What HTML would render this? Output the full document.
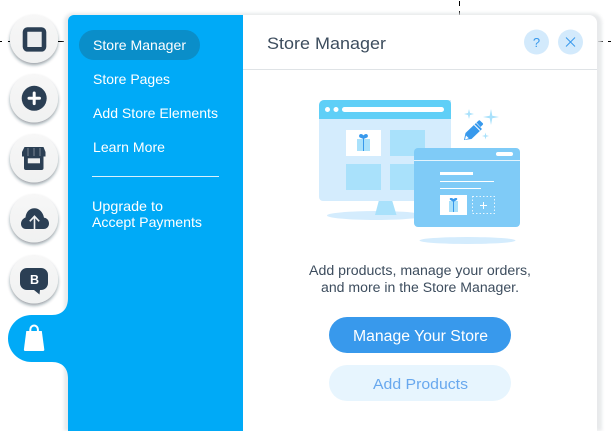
<!DOCTYPE html>
<html>
<head>
<meta charset="utf-8">
<style>
html,body{margin:0;padding:0;background:#fff;width:611px;height:431px;overflow:hidden}
svg{display:block}
text{font-family:"Liberation Sans",sans-serif}
</style>
</head>
<body>
<svg width="611" height="431" viewBox="0 0 611 431" xmlns="http://www.w3.org/2000/svg">
<defs>
<linearGradient id="btn" x1="0" x2="0" y1="0" y2="1"><stop offset="0" stop-color="#f7f7f7"/><stop offset="1" stop-color="#f0f1f1"/></linearGradient>
<filter id="sh" x="-30%" y="-30%" width="160%" height="160%"><feDropShadow dx="0" dy="2" stdDeviation="1.5" flood-color="#1f2d3d" flood-opacity=".45"/></filter>
<filter id="s2" x="-5%" y="-5%" width="110%" height="110%"><feGaussianBlur stdDeviation="1.5"/></filter>
</defs>

<!-- guide lines -->
<g fill="#000">
<rect x="0" y="41" width="2" height="1"/><rect x="8" y="41" width="2" height="1"/><rect x="58" y="41" width="6" height="1"/>
<rect x="598" y="41" width="5" height="1"/><rect x="608" y="41" width="3" height="1"/>
<rect x="459" y="1" width="1" height="5"/><rect x="459" y="11" width="1" height="4"/>
</g>

<!-- panel shadow -->
<path d="M72 13H592a10 10 0 0 1 10 10V431H64V22a9 9 0 0 1 8-9Z" fill="#e4e6e8" filter="url(#s2)" opacity=".85"/>

<!-- white panel -->
<path d="M243 15H589a8 8 0 0 1 8 8V431H243Z" fill="#fff"/>
<!-- blue panel -->
<path d="M74 15H243V431H68V21a6 6 0 0 1 6-6Z" fill="#00aaf7"/>
<!-- white divider -->
<rect x="243" y="69" width="354" height="1" fill="#dfe3e6"/>

<!-- active tab -->
<path d="M60 296H68V380H60Z" fill="#fff" opacity="0"/>
<path d="M68 298C68 309 62 315 52 315H31.500A23.500 23.500 0 0 0 31.500 362H52C62 362 68 368 68 378Z" fill="#00aaf7"/>
<path d="M26.300 331H41.800L44.300 349.500Q44.400 351 43 351H25.200Q23.800 351 23.900 349.500Z" fill="#fff"/>
<path d="M30.300 334V329.500A3.800 4 0 0 1 37.900 329.500V334" fill="none" stroke="#fff" stroke-width="2"/>

<!-- nav -->
<rect x="79" y="30" width="121" height="30" rx="15" fill="#0a8ec9"/>
<g fill="#fff" font-size="14">
<text x="93" y="50" textLength="93" lengthAdjust="spacingAndGlyphs">Store Manager</text>
<text x="93" y="84" textLength="77" lengthAdjust="spacingAndGlyphs">Store Pages</text>
<text x="93" y="118" textLength="125" lengthAdjust="spacingAndGlyphs">Add Store Elements</text>
<text x="93" y="152" textLength="72" lengthAdjust="spacingAndGlyphs">Learn More</text>
<text x="92" y="211" textLength="71" lengthAdjust="spacingAndGlyphs">Upgrade to</text>
<text x="92" y="227" textLength="110" lengthAdjust="spacingAndGlyphs">Accept Payments</text>
</g>
<rect x="92" y="176" width="127" height="1" fill="#d8f1fd"/>

<!-- header -->
<text x="267" y="49" font-size="17" fill="#3d4d5e" textLength="119" lengthAdjust="spacingAndGlyphs">Store Manager</text>
<circle cx="536.500" cy="42" r="12.500" fill="#d3eafc"/>
<circle cx="570.500" cy="42" r="12.500" fill="#d3eafc"/>
<text x="536.500" y="47" font-size="13" fill="#3899ec" text-anchor="middle">?</text>
<path d="M566 37.500L575 46.500M575 37.500L566 46.500" stroke="#3899ec" stroke-width="1" fill="none"/>

<!-- side circles -->
<g filter="url(#sh)" fill="url(#btn)">
<circle cx="34" cy="39" r="24"/>
<circle cx="34" cy="98.500" r="24"/>
<circle cx="34" cy="158.500" r="24"/>
<circle cx="34" cy="218.500" r="24"/>
<circle cx="34" cy="279.500" r="24"/>
</g>

<!-- icon: square -->
<rect x="25" y="29.500" width="19" height="19.800" rx="2.500" fill="#eceef0" stroke="#2b3f54" stroke-width="4.600"/>
<!-- icon: plus -->
<circle cx="34.200" cy="98.300" r="12.500" fill="#2b3f54"/>
<path d="M29 98.300H39.500M34.200 93V103.600" stroke="#fff" stroke-width="3" fill="none" stroke-linecap="round"/>
<!-- icon: store -->
<path d="M24.500 147H43.500L45.500 152V156.500H22V152Z" fill="#2b3f54"/>
<path d="M28 148V156M34 148V156M40 148V156" stroke="#8c98a4" stroke-width=".8"/>
<path d="M24 156.500H43.500V168a2 2 0 0 1-2 2H26a2 2 0 0 1-2-2Z" fill="#2b3f54"/>
<rect x="27.800" y="158.300" width="12.200" height="5" fill="#eef0f1"/>
<!-- icon: cloud -->
<path d="M26 229H43.500C47 229 49 226.500 49 223.500C49 220.500 47 218 44 217.800C43 212 39 208.300 34.500 208.300C29.500 208.300 26 212 25.500 217.500C23 218.500 21 220.800 21 223.800C21 227 23 229 26 229Z" fill="#2b3f54"/>
<path d="M34.500 229V217M29.800 221.300L34.500 216.300L39.200 221.300" stroke="#f1f2f3" stroke-width="1.600" fill="none"/>
<!-- icon: bubble -->
<path d="M27 268H41a7 7 0 0 1 7 7V283a7 7 0 0 1-7 7H40L39.500 294.500L34 290H27a7 7 0 0 1-7-7V275a7 7 0 0 1 7-7Z" fill="#2b3f54"/>
<text x="34.500" y="284" font-size="12.500" font-weight="bold" fill="#fff" text-anchor="middle">B</text>

<!-- illustration: monitor -->
<ellipse cx="376" cy="215.500" rx="49" ry="4.500" fill="#d4ecfd"/>
<path d="M379 200H392L396.500 215H375Z" fill="#a9e1fb"/>
<path d="M324 100H451V201H323a4 4 0 0 1-4-4V105a5 5 0 0 1 5-5Z" fill="#d4ecfd"/>
<path d="M324 100H447a4 4 0 0 1 4 4V119H319V105a5 5 0 0 1 5-5Z" fill="#5fcff7"/>
<circle cx="327.500" cy="109.500" r="2.500" fill="#fff"/>
<circle cx="336" cy="109.500" r="2.500" fill="#fff"/>
<rect x="342" y="107" width="102" height="5" rx="2.500" fill="#fff"/>
<rect x="346" y="130" width="35" height="26" fill="#fff"/>
<rect x="390" y="130" width="35" height="26" fill="#a9e1fb"/>
<rect x="346" y="164" width="35" height="26" fill="#a9e1fb"/>
<rect x="390" y="164" width="35" height="26" fill="#a9e1fb"/>
<rect x="357" y="139" width="13" height="12" fill="#a9e1fb"/>
<rect x="363" y="136" width="1" height="15" fill="#3899ec"/>
<path d="M363.500 139L359.800 137.500C358.500 136.500 359 134 361 134C362.500 134 363.500 135.500 363.500 135.500C363.500 135.500 364.500 134 366 134C368 134 368.500 136.500 367.200 137.500Z" fill="#3899ec"/>

<!-- illustration: second window -->
<ellipse cx="467.500" cy="240.500" rx="48" ry="3.500" fill="#d4ecfd"/>
<rect x="414" y="148" width="106" height="79" rx="4" fill="#7fcbf7"/>
<rect x="414" y="160" width="106" height="1" fill="#e4f4fd"/>
<rect x="496" y="152" width="17" height="4" rx="2" fill="#fff"/>
<rect x="440" y="172" width="33" height="3" fill="#fff"/>
<rect x="440" y="181" width="54" height="1" fill="#fff"/>
<rect x="440" y="188" width="41" height="1" fill="#fff"/>
<rect x="440" y="195" width="27" height="20" fill="#fff"/>
<rect x="449" y="201" width="9" height="11" fill="#a9e1fb"/>
<rect x="453" y="199" width="1" height="13" fill="#3899ec"/>
<path d="M453.500 202L450.300 200C449.200 199 449.800 198 451 198C452.500 198 453.500 199 453.500 199C453.500 199 454.500 198 456 198C457.200 198 457.800 199 456.700 200Z" fill="#3899ec"/>
<rect x="472.500" y="196.500" width="22" height="17" fill="none" stroke="#e8f6fe" stroke-width="1" stroke-dasharray="1.500 2"/>
<path d="M480 205.500H487M483.500 202V209" stroke="#fff" stroke-width="1" fill="none"/>

<!-- sparkles -->
<g fill="#a9e1fb">
<path d="M469 109L470 113L474 114L470 115L469 119L468 115L464 114L468 113Z"/>
<path d="M491 109L492.300 115.700L499 117L492.300 118.300L491 125L489.700 118.300L483 117L489.700 115.700Z"/>
<path d="M485.500 132.500L486.200 135.300L489 136L486.200 136.700L485.500 139.500L484.800 136.700L482 136L484.800 135.300Z"/>
</g>
<!-- pen -->
<path d="M464 140L465.500 133L476 123L482 129L471.500 139Z" fill="#3899ec"/>
<path d="M476.500 122.500L478.700 120.500Q479.500 120 480.200 120.700L482.800 123.300Q483.500 124 482.800 124.800L480.500 127Z" fill="#3899ec"/>
<path d="M474 124.500L480 130.500" stroke="#fff" stroke-width="1"/>
<path d="M465 139.500L466 135.500L468.800 138.300Z" fill="#fff"/>

<!-- copy -->
<g fill="#3d4d5e" font-size="13.500" text-anchor="start">
<text x="309" y="275" textLength="222" lengthAdjust="spacingAndGlyphs">Add products, manage your orders,</text>
<text x="321" y="292" textLength="198" lengthAdjust="spacingAndGlyphs">and more in the Store Manager.</text>
</g>

<!-- buttons -->
<rect x="329" y="317" width="182" height="36" rx="18" fill="#3899ec"/>
<text x="353" y="341" font-size="15.500" fill="#fff" textLength="135" lengthAdjust="spacingAndGlyphs">Manage Your Store</text>
<rect x="329" y="365" width="182" height="36" rx="18" fill="#e7f5fe"/>
<text x="373" y="389" font-size="15" fill="#68a8ee" textLength="95" lengthAdjust="spacingAndGlyphs">Add Products</text>
</svg>
</body>
</html>
